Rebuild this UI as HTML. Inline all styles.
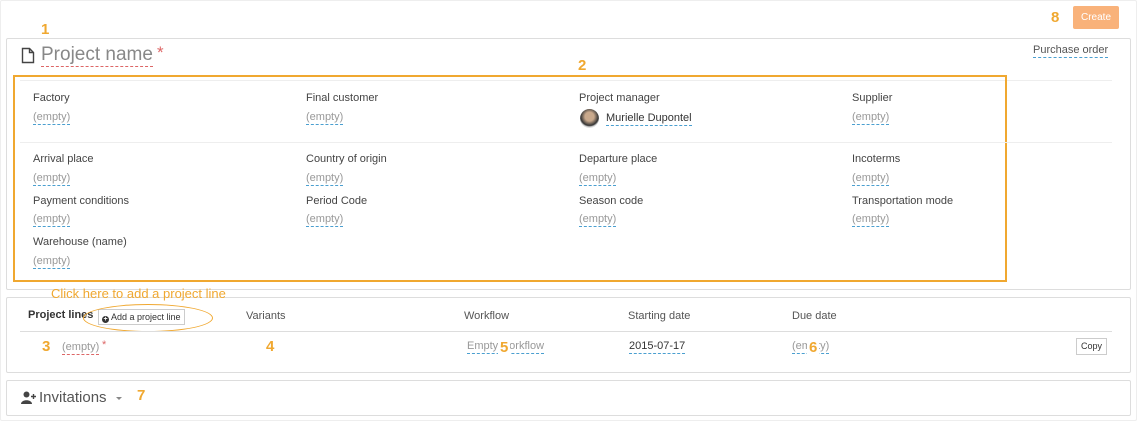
<!DOCTYPE html>
<html><head><style>
body{margin:0;width:1137px;height:421px;background:#fff;font-family:"Liberation Sans",sans-serif;position:relative;overflow:hidden;color:#444;font-size:11px}
.a{position:absolute;white-space:nowrap}
.p{position:absolute;border:1px solid #ddd;border-radius:2px;background:#fff}
.l{color:#444}
.e{color:#999;border-bottom:1px dashed #4a9fd0;line-height:13px}
.n{color:#f0a830;font-weight:bold;font-size:15px}
</style></head><body>
<div class="p" style="left:0;top:0;width:1135px;height:419px;border-color:#eee"></div>
<div class="a" style="left:1073px;top:6px;width:46px;height:23px;background:#f9b27a;border-radius:2px;color:#fff;font-size:10px;text-align:center;line-height:23px">Create</div>
<div class="a n" style="left:1051px;top:9px">8</div>

<div class="p" style="left:6px;top:38px;width:1123px;height:250px"></div>
<div class="a n" style="left:41px;top:21px">1</div>
<svg class="a" style="left:21px;top:47px" width="14" height="17" viewBox="0 0 14 17"><path d="M1.5 1.5h7l4 4v10h-11z M8.5 1.5v4h4" fill="none" stroke="#444" stroke-width="1.4"/></svg>
<div class="a" style="left:41px;top:44px;font-size:19px;color:#888;border-bottom:1px dashed #d66;line-height:22px">Project name</div>
<div class="a" style="left:157px;top:43px;font-size:17px;color:#d66">*</div>
<div class="a" style="left:1033px;top:44px;color:#555;border-bottom:1px dashed #4a9fd0;line-height:13px">Purchase order</div>
<div class="a" style="left:20px;top:80px;width:1092px;height:1px;background:#eee"></div>
<div class="a n" style="left:578px;top:57px">2</div>
<div class="a" style="left:13px;top:75px;width:990px;height:203px;border:2px solid #f0a830"></div>
<div class="a" style="left:20px;top:142px;width:1092px;height:1px;background:#eee"></div>

<div class="a l" style="left:33px;top:92px">Factory</div><div class="a e" style="left:33px;top:111px">(empty)</div>
<div class="a l" style="left:306px;top:92px">Final customer</div><div class="a e" style="left:306px;top:111px">(empty)</div>
<div class="a l" style="left:579px;top:92px">Project manager</div>
<div class="a" style="left:580px;top:109px;width:19px;height:19px;border-radius:50%;background:radial-gradient(circle at 50% 40%,#c9a98c 30%,#333 60%,#ddd 70%)"></div>
<div class="a" style="left:606px;top:112px;color:#333;border-bottom:1px dashed #4a9fd0;line-height:13px">Murielle Dupontel</div>
<div class="a l" style="left:852px;top:92px">Supplier</div><div class="a e" style="left:852px;top:111px">(empty)</div>

<div class="a l" style="left:33px;top:153px">Arrival place</div><div class="a e" style="left:33px;top:172px">(empty)</div>
<div class="a l" style="left:306px;top:153px">Country of origin</div><div class="a e" style="left:306px;top:172px">(empty)</div>
<div class="a l" style="left:579px;top:153px">Departure place</div><div class="a e" style="left:579px;top:172px">(empty)</div>
<div class="a l" style="left:852px;top:153px">Incoterms</div><div class="a e" style="left:852px;top:172px">(empty)</div>

<div class="a l" style="left:33px;top:195px">Payment conditions</div><div class="a e" style="left:33px;top:213px">(empty)</div>
<div class="a l" style="left:306px;top:195px">Period Code</div><div class="a e" style="left:306px;top:213px">(empty)</div>
<div class="a l" style="left:579px;top:195px">Season code</div><div class="a e" style="left:579px;top:213px">(empty)</div>
<div class="a l" style="left:852px;top:195px">Transportation mode</div><div class="a e" style="left:852px;top:213px">(empty)</div>

<div class="a l" style="left:33px;top:236px">Warehouse (name)</div><div class="a e" style="left:33px;top:255px">(empty)</div>

<div class="p" style="left:6px;top:297px;width:1123px;height:74px"></div>
<div class="a" style="left:51px;top:286px;color:#f0a830;font-size:13px">Click here to add a project line</div>
<div class="a" style="left:28px;top:309px;font-weight:bold;color:#333">Project lines</div>
<div class="a" style="left:98px;top:309px;border:1px solid #ccc;background:#fff;height:14px;line-height:14px;padding:0 3px;font-size:9px;color:#333"><span style="display:inline-block;width:7px;height:7px;background:#333;border-radius:50%;color:#fff;font-size:7px;line-height:7px;text-align:center;font-weight:bold;vertical-align:-1px">+</span> Add a project line</div>
<div class="a" style="left:83px;top:304px;width:128px;height:26px;border:1.5px solid #f0a830;border-radius:50%"></div>
<div class="a l" style="left:246px;top:310px;color:#555">Variants</div>
<div class="a l" style="left:464px;top:310px;color:#555">Workflow</div>
<div class="a l" style="left:628px;top:310px;color:#555">Starting date</div>
<div class="a l" style="left:792px;top:310px;color:#555">Due date</div>
<div class="a" style="left:20px;top:331px;width:1092px;height:1px;background:#ddd"></div>
<div class="a n" style="left:42px;top:338px">3</div>
<div class="a" style="left:62px;top:341px;color:#999;border-bottom:1px dashed #d66;line-height:13px">(empty)</div><div class="a" style="left:102px;top:339px;color:#d66">*</div>
<div class="a n" style="left:266px;top:338px">4</div>
<div class="a e" style="left:467px;top:340px">Empty workflow</div>
<div class="a n" style="left:498px;top:339px;background:#fff;padding:0 2px">5</div>
<div class="a" style="left:629px;top:340px;color:#333;border-bottom:1px dashed #4a9fd0;line-height:13px">2015-07-17</div>
<div class="a e" style="left:792px;top:340px">(empty)</div>
<div class="a n" style="left:807px;top:339px;background:#fff;padding:0 2px">6</div>
<div class="a" style="left:1076px;top:338px;border:1px solid #ccc;height:15px;line-height:15px;padding:0 4px;font-size:9px;color:#333">Copy</div>

<div class="p" style="left:6px;top:380px;width:1123px;height:34px"></div>
<svg class="a" style="left:21px;top:391px" width="16" height="13" viewBox="0 0 16 13"><circle cx="5.5" cy="3.5" r="3" fill="#444"/><path d="M0 13c0-5 11-5 11 0z" fill="#444"/><path d="M12.5 3v5M10 5.5h5" stroke="#444" stroke-width="1.4"/></svg>
<div class="a" style="left:39px;top:389px;font-size:15px;color:#555">Invitations</div>
<div class="a" style="left:116px;top:397px;width:0;height:0;border-left:3px solid transparent;border-right:3px solid transparent;border-top:3px solid #888"></div>
<div class="a n" style="left:137px;top:387px">7</div>
</body></html>
